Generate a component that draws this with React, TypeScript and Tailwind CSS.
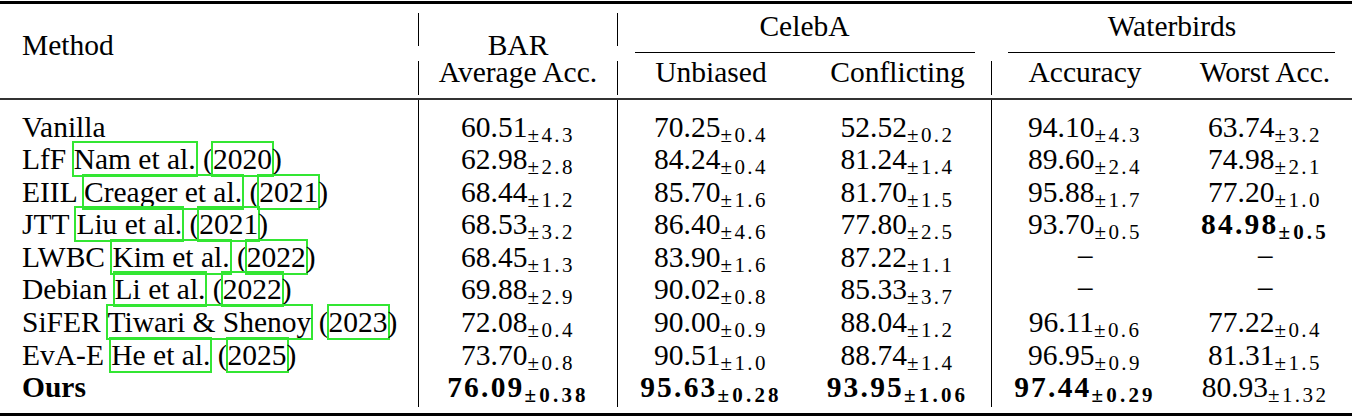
import React from "react";

type Cell = { v: string; s: string; b?: boolean } | null;

type Row = {
  name: string;
  cite?: string;
  year?: string;
  bold?: boolean;
  cells: Cell[];
};

const rows: Row[] = [
  {
    name: "Vanilla",
    cells: [
      { v: "60.51", s: "4.3" },
      { v: "70.25", s: "0.4" },
      { v: "52.52", s: "0.2" },
      { v: "94.10", s: "4.3" },
      { v: "63.74", s: "3.2" },
    ],
  },
  {
    name: "LfF",
    cite: "Nam et al.",
    year: "2020",
    cells: [
      { v: "62.98", s: "2.8" },
      { v: "84.24", s: "0.4" },
      { v: "81.24", s: "1.4" },
      { v: "89.60", s: "2.4" },
      { v: "74.98", s: "2.1" },
    ],
  },
  {
    name: "EIIL",
    cite: "Creager et al.",
    year: "2021",
    cells: [
      { v: "68.44", s: "1.2" },
      { v: "85.70", s: "1.6" },
      { v: "81.70", s: "1.5" },
      { v: "95.88", s: "1.7" },
      { v: "77.20", s: "1.0" },
    ],
  },
  {
    name: "JTT",
    cite: "Liu et al.",
    year: "2021",
    cells: [
      { v: "68.53", s: "3.2" },
      { v: "86.40", s: "4.6" },
      { v: "77.80", s: "2.5" },
      { v: "93.70", s: "0.5" },
      { v: "84.98", s: "0.5", b: true },
    ],
  },
  {
    name: "LWBC",
    cite: "Kim et al.",
    year: "2022",
    cells: [
      { v: "68.45", s: "1.3" },
      { v: "83.90", s: "1.6" },
      { v: "87.22", s: "1.1" },
      null,
      null,
    ],
  },
  {
    name: "Debian",
    cite: "Li et al.",
    year: "2022",
    cells: [
      { v: "69.88", s: "2.9" },
      { v: "90.02", s: "0.8" },
      { v: "85.33", s: "3.7" },
      null,
      null,
    ],
  },
  {
    name: "SiFER",
    cite: "Tiwari & Shenoy",
    year: "2023",
    cells: [
      { v: "72.08", s: "0.4" },
      { v: "90.00", s: "0.9" },
      { v: "88.04", s: "1.2" },
      { v: "96.11", s: "0.6" },
      { v: "77.22", s: "0.4" },
    ],
  },
  {
    name: "EvA-E",
    cite: "He et al.",
    year: "2025",
    cells: [
      { v: "73.70", s: "0.8" },
      { v: "90.51", s: "1.0" },
      { v: "88.74", s: "1.4" },
      { v: "96.95", s: "0.9" },
      { v: "81.31", s: "1.5" },
    ],
  },
  {
    name: "Ours",
    bold: true,
    cells: [
      { v: "76.09", s: "0.38", b: true },
      { v: "95.63", s: "0.28", b: true },
      { v: "93.95", s: "1.06", b: true },
      { v: "97.44", s: "0.29", b: true },
      { v: "80.93", s: "1.32" },
    ],
  },
];

// data columns: width + whether a rule sits on the left
const cols = [
  { w: "w-[199px] border-l border-black", i: 0 },
  { w: "w-[187px] border-l border-black", i: 1 },
  { w: "w-[187px]", i: 2 },
  { w: "w-[187px] border-l border-black", i: 3 },
  { w: "w-[174px]", i: 4 },
];

const Link = ({ children }: { children: React.ReactNode }) => (
  <span className="shadow-[0_0_0_2px_#33e633]">{children}</span>
);

const Num = ({ cell }: { cell: Cell }) => {
  if (!cell) return <span className="text-[32px]">−</span>;
  return (
    <span className={cell.b ? "font-bold" : ""}>
      <span className={cell.b ? "tracking-[2.2px]" : ""}>{cell.v}</span>
      <span
        className={`text-[21px] align-[-5px] ${cell.b ? "tracking-[3.2px]" : "tracking-[2.4px]"}`}
      >
        ±{cell.s}
      </span>
    </span>
  );
};

const Seg = ({ top, bottom }: { top: boolean; bottom: boolean }) => (
  <div className="flex w-px flex-col">
    <div className={`mt-[9px] h-[33px] ${top ? "bg-black" : ""}`} />
    <div className={`mt-[15px] h-[34px] ${bottom ? "bg-black" : ""}`} />
  </div>
);

export default function App() {
  return (
    <div className="h-[418px] w-[1356px] bg-white pt-px font-['Liberation_Serif','Times_New_Roman',serif] text-[29.5px] leading-[32px] text-black">
      <div className="w-[1352px]">
        <div className="h-[3px] bg-black" />

        {/* header */}
        <div className="flex h-[94px]">
          <div className="w-[418px] pl-[22px] pt-[25px]">Method</div>

          <div className="flex w-[199px]">
            <Seg top bottom />
            <div className="flex flex-1 flex-col items-center pt-[27.5px] leading-[27px]">
              <div>BAR</div>
              <div>Average Acc.</div>
            </div>
          </div>

          <div className="flex w-[374px]">
            <Seg top bottom />
            <div className="flex flex-1 flex-col pt-[6px]">
              <div className="text-center">CelebA</div>
              <div className="ml-[17px] mr-[16px] mt-[10px] h-px bg-black" />
              <div className="mt-[3px] flex">
                <div className="w-[186px] text-center">Unbiased</div>
                <div className="w-[187px] text-center">Conflicting</div>
              </div>
            </div>
          </div>

          <div className="flex w-[361px]">
            <Seg top={false} bottom />
            <div className="flex flex-1 flex-col pt-[6px]">
              <div className="text-center">Waterbirds</div>
              <div className="ml-[16px] mr-[17px] mt-[10px] h-px bg-black" />
              <div className="mt-[3px] flex">
                <div className="w-[186px] text-center">Accuracy</div>
                <div className="w-[174px] text-center">Worst Acc.</div>
              </div>
            </div>
          </div>
        </div>

        <div className="h-[2px] bg-[#333]" />

        {/* body */}
        <div className="flex leading-[32.6px]">
          <div className="w-[418px] pl-[22px] pt-[10.5px] pb-[2.8px]">
            {rows.map((r) => (
              <div key={r.name} className={`h-[32.6px] whitespace-nowrap ${r.bold ? "font-bold" : ""}`}>
                {r.name}
                {r.cite && (
                  <>
                    {" "}
                    <Link>{r.cite}</Link> (<Link>{r.year}</Link>)
                  </>
                )}
              </div>
            ))}
          </div>
          {cols.map((c) => (
            <div key={c.i} className={`${c.w} pt-[10.5px] pb-[2.8px]`}>
              {rows.map((r) => (
                <div key={r.name} className="h-[32.6px] whitespace-nowrap text-center">
                  <Num cell={r.cells[c.i]} />
                </div>
              ))}
            </div>
          ))}
        </div>

        <div className="mt-[6px] h-[3px] bg-black" />
      </div>
    </div>
  );
}
